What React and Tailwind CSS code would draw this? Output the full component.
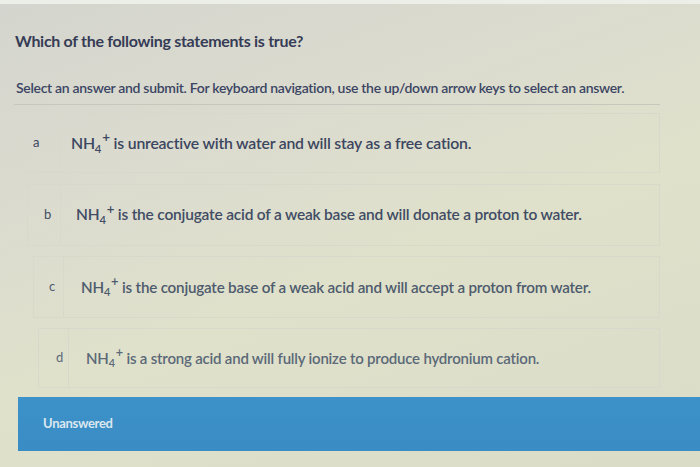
import React from "react";

const options = [
  { key: "a", text: "is unreactive with water and will stay as a free cation.", box: "ml-[22px] mt-[8px] h-[60px]", cell: "w-[38px] pl-[10px]", textPad: "pl-[10px]", size: "text-[15.8px]", color: "text-[#3c4660]" },
  { key: "b", text: "is the conjugate acid of a weak base and will donate a proton to water.", box: "ml-[27px] mt-[11px] h-[62px]", cell: "w-[33px] pl-[16px]", textPad: "pl-[15px]", size: "text-[15.5px]", color: "text-[#414c64]" },
  { key: "c", text: "is the conjugate base of a weak acid and will accept a proton from water.", box: "ml-[33px] mt-[10px] h-[62px]", cell: "w-[30px] pl-[15px]", textPad: "pl-[17px]", size: "text-[15.2px]", color: "text-[#4e5b6d]" },
  { key: "d", text: "is a strong acid and will fully ionize to produce hydronium cation.", box: "ml-[38px] mt-[10px] h-[60px]", cell: "w-[30px] pl-[17px]", textPad: "pl-[17px]", size: "text-[15px]", color: "text-[#5b6978]" },
];

function Ammonium() {
  return (
    <span className="whitespace-nowrap">
      NH
      <span className="relative top-[0.3em] text-[0.72em]">4</span>
      <span className="relative -top-[0.5em] ml-[1px] text-[0.85em]">+</span>
    </span>
  );
}

export default function App() {
  return (
    <div
      className="relative w-[700px] h-[467px] overflow-hidden bg-[linear-gradient(160deg,#d4d5ce_0%,#dbdbcf_30%,#dfe1cb_55%,#dadcc8_100%)]"
      style={{ fontFamily: "Lato, 'Open Sans', sans-serif" }}
    >
      <div className="h-[4px] bg-[#eceee8]" />

      <div className="pl-[15px] pt-[27px] text-[16px] font-bold tracking-[-0.3px] text-[#363c55] leading-[20px]">
        Which of the following statements is true?
      </div>

      <div className="pl-[16px] pt-[29px] text-[14px] font-semibold tracking-[-0.3px] text-[#3b4563] leading-[16px]">
        Select an answer and submit. For keyboard navigation, use the up/down arrow keys to select an answer.
      </div>

      <div className="mt-[8px] ml-[14px] mr-[40px] h-px bg-[#c6c8bd]" />

      <div className="flex flex-col">
        {options.map((o) => (
          <div key={o.key} className={`${o.box} mr-[40px] flex items-center border border-[#d7d9cb]`}>
            <div className={`${o.cell} self-stretch flex items-center border-r border-[#d7d9cb] text-[13px] ${o.color}`}>
              {o.key}
            </div>
            <div className={`${o.textPad} ${o.size} font-semibold tracking-[-0.2px] ${o.color}`}>
              <Ammonium /> {o.text}
            </div>
          </div>
        ))}
      </div>

      <div className="mt-[9px] ml-[18px] h-[54px] bg-[linear-gradient(180deg,#3c92c9_0%,#3a8cc4_100%)] flex items-center pl-[25px] text-[13px] font-bold tracking-[-0.3px] text-[#dbe7ef]">
        Unanswered
      </div>
    </div>
  );
}
